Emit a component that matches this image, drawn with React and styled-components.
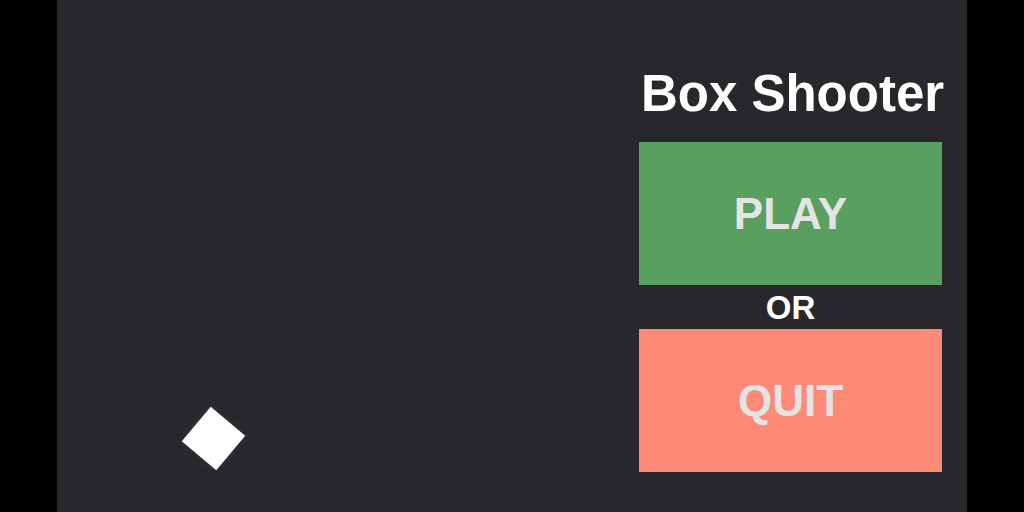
import React from "react";
import styled, { createGlobalStyle } from "styled-components";

const GlobalStyle = createGlobalStyle`
  html, body {
    margin: 0;
    padding: 0;
    background: #000;
    height: 100%;
  }
  #root {
    height: 100%;
  }
`;

const Screen = styled.div`
  width: 100vw;
  height: 100vh;
  display: flex;
  justify-content: center;
  background: #000;
  font-family: "Liberation Sans", Arial, sans-serif;
`;

const Stage = styled.div`
  width: 910px;
  height: 512px;
  background: #28272c;
  display: flex;
  justify-content: space-between;
`;

const Field = styled.div`
  flex: 1;
  position: relative;
`;

const Player = styled.div`
  position: absolute;
  left: ${(p) => p.x}px;
  top: ${(p) => p.y}px;
  width: 45px;
  height: 45px;
  background: #fff;
  transform: rotate(${(p) => p.angle}deg);
  box-shadow: 0 0 8px rgba(255, 255, 255, 0.08);
`;

const Menu = styled.div`
  width: 303px;
  margin-right: 25px;
  padding-top: 68px;
  display: flex;
  flex-direction: column;
  align-items: stretch;
`;

const Title = styled.h1`
  margin: 0 -12px 23px -8px;
  color: #fff;
  font-size: 51px;
  line-height: 51px;
  font-weight: 700;
  text-align: center;
  white-space: nowrap;
`;

const MenuButton = styled.button`
  flex-shrink: 0;
  height: 143px;
  border: none;
  padding: 0;
  background: ${(p) => p.bg};
  color: #e4e4e4;
  font-family: inherit;
  font-size: 44px;
  font-weight: 700;
  cursor: pointer;
`;

const Divider = styled.div`
  flex-shrink: 0;
  height: 44px;
  line-height: 46px;
  color: #fff;
  font-size: 33px;
  font-weight: 700;
  text-align: center;
`;

export default function App() {
  return (
    <>
      <GlobalStyle />
      <Screen>
        <Stage>
          <Field>
            <Player x={134} y={416} angle={40} />
          </Field>
          <Menu>
            <Title>Box Shooter</Title>
            <MenuButton bg="#59a060">PLAY</MenuButton>
            <Divider>OR</Divider>
            <MenuButton bg="#fd8a77">QUIT</MenuButton>
          </Menu>
        </Stage>
      </Screen>
    </>
  );
}
